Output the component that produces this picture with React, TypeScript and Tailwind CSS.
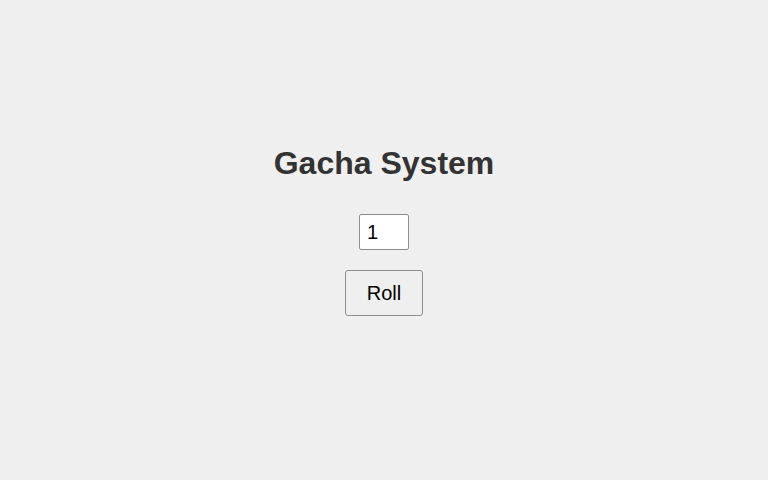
import { useState } from "react";

const App = () => {
  const [count, setCount] = useState("1");

  return (
    <div className="flex min-h-[480px] w-full flex-col items-center bg-[#f0f0f0] pt-[145px] font-['Liberation_Sans',Arial,sans-serif]">
      <h1 className="text-[32px] font-bold leading-[37px] text-[#333]">Gacha System</h1>
      <input
        type="number"
        min={1}
        value={count}
        onChange={(e) => setCount(e.target.value)}
        className="mt-[32px] h-[36px] w-[50px] rounded-[2px] border border-[#8f8f8f] bg-white px-[7px] text-[20px] text-black outline-none [appearance:textfield] [&::-webkit-inner-spin-button]:appearance-none"
      />
      <button className="mt-[20px] h-[46px] w-[78px] rounded-[3px] border border-[#8f8f8f] bg-[#efefef] text-[20px] text-black">
        Roll
      </button>
    </div>
  );
};

export default App;
